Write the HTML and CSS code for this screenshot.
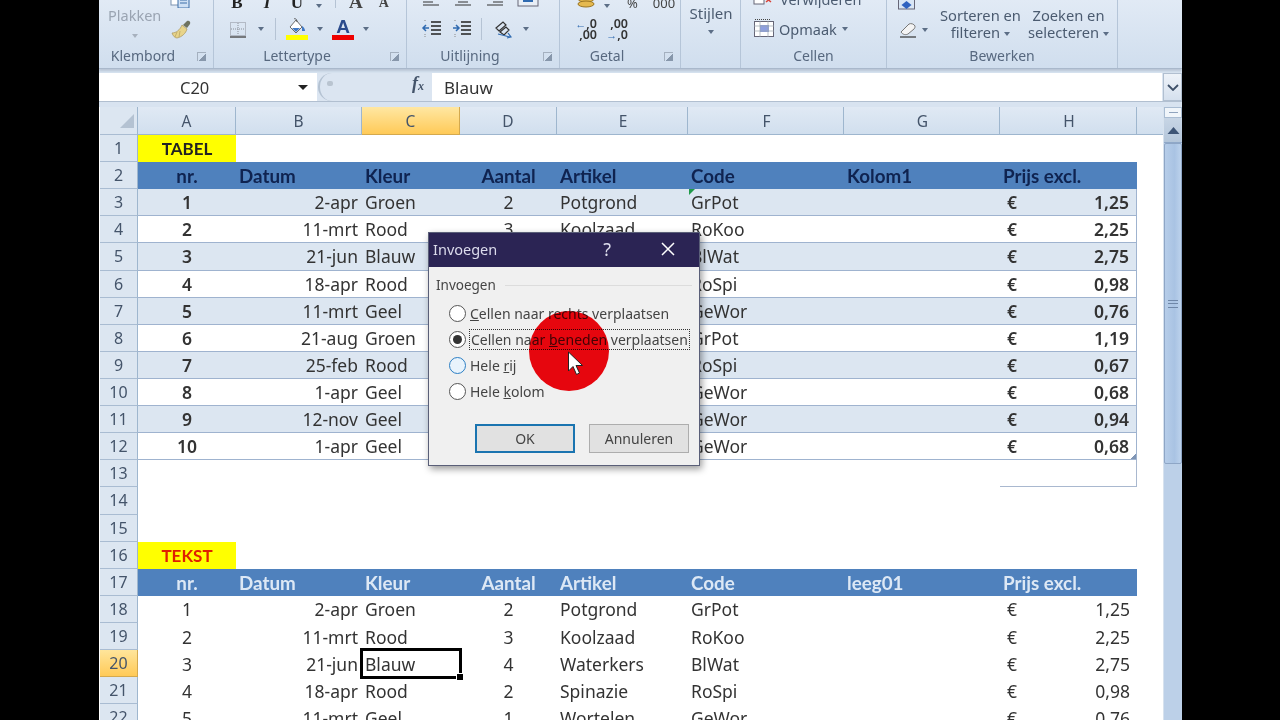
FILE: index.html
```html
<!DOCTYPE html>
<html lang="nl">
<head>
    <meta charset="UTF-8">
    <title>Invoegen - Excel</title>
    <link rel="stylesheet" href="styles.css">
</head>
<body>
<div class="app">
    <div class="ribbon">
        <div class="group g-klembord">
            <div class="tools">
                <div class="paste"><span>Plakken</span><i class="caret"></i></div>
                <div class="clip-icons">
                    <svg width="22" height="8" viewBox="0 3 22 8"><rect x="1" y="-6" width="11" height="14" fill="#fff" stroke="#7d93b0"/><rect x="8" y="-2" width="11" height="13" fill="#cfe0f4" stroke="#3c6ea8"/><path d="M10 3h7M10 6h7" stroke="#3c6ea8"/></svg>
                    <svg width="24" height="22" viewBox="0 0 24 22"><path d="M17 2c2-1 4 1 3 3l-3 4-4-3z" fill="#6f735f"/><path d="M12 6l5 4c-1 4-5 8-10 9-2 0-4-2-5-5 4 0 8-3 10-8z" fill="#e8d48a" stroke="#a8935a" stroke-width=".7"/><path d="M7 13l-2 5M10 12l-1 6" stroke="#b9a465" stroke-width=".8"/></svg>
                </div>
            </div>
            <div class="glabel lb"><span>Klembord</span><i class="launcher"></i></div>
        </div>
        <div class="group g-letter">
            <div class="tools col">
                <div class="irow r1">
                    <b class="fmt">B</b><em class="fmt ital">I</em><u class="fmt">U</u><i class="caret"></i><i class="vsep"></i><span class="big-a">A</span><span class="small-a">A</span>
                </div>
                <div class="irow r2">
                    <svg class="ic" width="20" height="20" viewBox="0 0 20 20"><rect x="2.500" y="3.500" width="15" height="13" fill="none" stroke="#8a8f98" stroke-dasharray="1 1"/><path d="M10 4v12M3 10h14" stroke="#8a8f98" stroke-dasharray="1 1"/><path d="M2 18h16" stroke="#555" stroke-width="1.500"/></svg>
                    <i class="caret"></i><i class="vsep"></i>
                    <span class="color-btn">
                        <svg width="24" height="17" viewBox="0 0 24 17"><path d="M5 9l6-7 6 7-6 6z" fill="#fff" stroke="#6b6b6b"/><path d="M7 10h8l-4 4z" fill="#3f78c4"/><path d="M17 8c2 1 3 3 3 5h-3z" fill="#3f78c4"/><path d="M9 1c1-1 3 0 3 3" fill="none" stroke="#555"/></svg>
                        <i class="swatch yellow"></i>
                    </span>
                    <i class="caret"></i>
                    <span class="color-btn">
                        <span class="a-letter">A</span>
                        <i class="swatch red"></i>
                    </span>
                    <i class="caret"></i>
                </div>
            </div>
            <div class="glabel lb"><span>Lettertype</span><i class="launcher"></i></div>
        </div>
        <div class="group g-uitlijn">
            <div class="tools col">
                <div class="irow r1 aligns">
                    <svg width="20" height="10" viewBox="0 0 20 10"><path d="M2 1h16M2 4h10M2 7h16" stroke="#333"/></svg>
                    <svg width="20" height="10" viewBox="0 0 20 10"><path d="M2 1h16M5 4h10M2 7h16" stroke="#333"/></svg>
                    <svg width="20" height="10" viewBox="0 0 20 10"><path d="M2 1h16M8 4h10M2 7h16" stroke="#333"/></svg>
                    <svg width="22" height="10" viewBox="0 0 22 10"><rect x="1" y="-3" width="20" height="11" fill="#e8eef6" stroke="#667"/><path d="M6 3h10" stroke="#2f6ab0" stroke-width="2"/></svg>
                </div>
                <div class="irow r2">
                    <svg width="22" height="20" viewBox="0 0 22 20"><path d="M10 3h10M10 7h10M10 11h10M10 15h10" stroke="#222" stroke-width="1.500"/><path d="M8 9H2M5 6L2 9l3 3" fill="none" stroke="#2f6ab0" stroke-width="1.500"/><path d="M4 1v2M4 15v3" stroke="#888" stroke-dasharray="1 1"/></svg>
                    <svg width="22" height="20" viewBox="0 0 22 20"><path d="M10 3h10M10 7h10M10 11h10M10 15h10" stroke="#222" stroke-width="1.500"/><path d="M2 9h6M5 6l3 3-3 3" fill="none" stroke="#2f6ab0" stroke-width="1.500"/><path d="M4 1v2M4 15v3" stroke="#888" stroke-dasharray="1 1"/></svg>
                    <i class="vsep"></i>
                    <svg class="orient" width="22" height="20" viewBox="0 0 22 20"><path d="M3 9l7-6 3 3-7 6zM7 13l6-5 3 3-5 5z" fill="none" stroke="#333" stroke-width="1.200"/><path d="M5 15l12 3M15 14l3 4-4 1" fill="none" stroke="#2f6ab0" stroke-width="1.200"/></svg>
                    <i class="caret"></i>
                </div>
            </div>
            <div class="glabel lb"><span>Uitlijning</span><i class="launcher"></i></div>
        </div>
        <div class="group g-getal">
            <div class="tools col">
                <div class="irow r1 nums">
                    <svg width="22" height="12" viewBox="0 0 22 12"><ellipse cx="11" cy="3" rx="8" ry="3" fill="#e5b94f" stroke="#9a7420"/><ellipse cx="11" cy="8" rx="8" ry="3" fill="#e5b94f" stroke="#9a7420"/></svg>
                    <i class="caret"></i>
                    <span class="num-top pct">%</span>
                    <span class="num-top">000</span>
                </div>
                <div class="irow r2 nums">
                    <span class="dec"><span><em class="arrow">←</em>,0</span><span>,00</span></span>
                    <span class="dec"><span>,00</span><span><em class="arrow">→</em>,0</span></span>
                </div>
            </div>
            <div class="glabel lb"><span>Getal</span><i class="launcher"></i></div>
        </div>
        <div class="group g-stijlen">
            <div class="tools stijlen"><span>Stijlen</span><i class="caret"></i></div>
            <div class="glabel"></div>
        </div>
        <div class="group g-cellen">
            <div class="tools col cellen">
                <div class="irow r1"><svg width="22" height="10" viewBox="0 2 22 10"><rect x="1" y="-4" width="10" height="12" fill="#fff" stroke="#667"/><path d="M13 2l5 4M18 2l-5 4" stroke="#d8443a" stroke-width="1.500"/></svg><span class="verw">Verwijderen</span><i class="caret"></i></div>
                <div class="irow r2"><svg width="22" height="22" viewBox="0 0 22 22"><rect x="1.500" y="3.500" width="19" height="15" fill="#fff" stroke="#667"/><rect x="7" y="7" width="9" height="7" fill="#8d9fe0"/><path d="M1 8h20M1 13h20M7 3v16M15 3v16" stroke="#9aa3ad" stroke-width=".7"/><path d="M2 1.500h16" stroke="#444" stroke-dasharray="1 1"/></svg><span>Opmaak</span><i class="caret"></i></div>
            </div>
            <div class="glabel"><span>Cellen</span></div>
        </div>
        <div class="group g-bewerken">
            <div class="tools bewerken">
                <div class="be-icons">
                    <svg width="18" height="10" viewBox="0 -2 18 10"><rect x=".5" y="-5" width="16" height="12" fill="#d9e6f5" stroke="#667"/><path d="M8.500 -1l5 4-5 4-5-4z" fill="#2f62c0"/></svg>
                    <div class="eraser">
                        <svg width="22" height="20" viewBox="0 0 22 20"><path d="M3 12l8-8c2-1 5 0 6 2 0 1 0 2-1 3l-6 5c-2 1-5 1-7-2z" fill="#f4f4f4" stroke="#777"/><path d="M2 17h16" stroke="#333" stroke-width="1.200"/></svg>
                        <i class="caret"></i>
                    </div>
                </div>
                <div class="big-btn"><span>Sorteren en</span><span>filteren<i class="caret"></i></span></div>
                <div class="big-btn"><span>Zoeken en</span><span>selecteren<i class="caret"></i></span></div>
            </div>
            <div class="glabel"><span>Bewerken</span></div>
        </div>
        <div class="group g-rest"></div>
    </div>

    <div class="formula">
        <div class="namebox"><span>C20</span><i class="caret dark"></i></div>
        <div class="fx-wrap"><i class="fx-dot"></i><span class="fx">f<sub>x</sub></span></div>
        <div class="finput">Blauw</div>
        <div class="fexpand"><svg width="12" height="7" viewBox="0 0 12 7"><path d="M1 1l5 5 5-5" fill="none" stroke="#3d4f68" stroke-width="1.800"/></svg></div>
    </div>

    <div class="workarea">
        <div class="sheet">
            <div class="row colhead">
                <div class="rh corner"><svg width="16" height="16" viewBox="0 0 16 16"><path d="M15 1v14H1z" fill="#b4c2d2"/></svg></div>
                <div class="ch">A</div><div class="ch">B</div><div class="ch active">C</div><div class="ch">D</div><div class="ch">E</div><div class="ch">F</div><div class="ch">G</div><div class="ch">H</div><div class="ch blank"></div>
            </div>

            <div class="row"><div class="rh">1</div><div class="c yellow-cell">TABEL</div></div>

            <div class="row thead dark-text"><div class="rh">2</div><div class="c ctr">nr.</div><div class="c">Datum</div><div class="c">Kleur</div><div class="c ctr">Aantal</div><div class="c">Artikel</div><div class="c">Code</div><div class="c">Kolom1</div><div class="c">Prijs excl.</div></div>

            <div class="row tr alt"><div class="rh">3</div><div class="c ctr b">1</div><div class="c rgt">2-apr</div><div class="c">Groen</div><div class="c ctr">2</div><div class="c">Potgrond</div><div class="c code-flag">GrPot</div><div class="c"></div><div class="c price b"><span>€</span><span>1,25</span></div></div>
            <div class="row tr"><div class="rh">4</div><div class="c ctr b">2</div><div class="c rgt">11-mrt</div><div class="c">Rood</div><div class="c ctr">3</div><div class="c">Koolzaad</div><div class="c">RoKoo</div><div class="c"></div><div class="c price b"><span>€</span><span>2,25</span></div></div>
            <div class="row tr alt"><div class="rh">5</div><div class="c ctr b">3</div><div class="c rgt">21-jun</div><div class="c">Blauw</div><div class="c ctr">4</div><div class="c">Waterkers</div><div class="c">BlWat</div><div class="c"></div><div class="c price b"><span>€</span><span>2,75</span></div></div>
            <div class="row tr"><div class="rh">6</div><div class="c ctr b">4</div><div class="c rgt">18-apr</div><div class="c">Rood</div><div class="c ctr">2</div><div class="c">Spinazie</div><div class="c">RoSpi</div><div class="c"></div><div class="c price b"><span>€</span><span>0,98</span></div></div>
            <div class="row tr alt"><div class="rh">7</div><div class="c ctr b">5</div><div class="c rgt">11-mrt</div><div class="c">Geel</div><div class="c ctr">1</div><div class="c">Wortelen</div><div class="c">GeWor</div><div class="c"></div><div class="c price b"><span>€</span><span>0,76</span></div></div>
            <div class="row tr"><div class="rh">8</div><div class="c ctr b">6</div><div class="c rgt">21-aug</div><div class="c">Groen</div><div class="c ctr">3</div><div class="c">Potgrond</div><div class="c">GrPot</div><div class="c"></div><div class="c price b"><span>€</span><span>1,19</span></div></div>
            <div class="row tr alt"><div class="rh">9</div><div class="c ctr b">7</div><div class="c rgt">25-feb</div><div class="c">Rood</div><div class="c ctr">2</div><div class="c">Spinazie</div><div class="c">RoSpi</div><div class="c"></div><div class="c price b"><span>€</span><span>0,67</span></div></div>
            <div class="row tr"><div class="rh">10</div><div class="c ctr b">8</div><div class="c rgt">1-apr</div><div class="c">Geel</div><div class="c ctr">1</div><div class="c">Wortelen</div><div class="c">GeWor</div><div class="c"></div><div class="c price b"><span>€</span><span>0,68</span></div></div>
            <div class="row tr alt"><div class="rh">11</div><div class="c ctr b">9</div><div class="c rgt">12-nov</div><div class="c">Geel</div><div class="c ctr">2</div><div class="c">Wortelen</div><div class="c">GeWor</div><div class="c"></div><div class="c price b"><span>€</span><span>0,94</span></div></div>
            <div class="row tr last"><div class="rh">12</div><div class="c ctr b">10</div><div class="c rgt">1-apr</div><div class="c">Geel</div><div class="c ctr">1</div><div class="c">Wortelen</div><div class="c">GeWor</div><div class="c"></div><div class="c price b"><span>€</span><span>0,68</span><i class="handle"></i></div></div>

            <div class="row"><div class="rh">13</div><div class="c"></div><div class="c"></div><div class="c"></div><div class="c"></div><div class="c"></div><div class="c"></div><div class="c"></div><div class="c frame"></div></div>
            <div class="row"><div class="rh">14</div></div>
            <div class="row"><div class="rh">15</div></div>

            <div class="row"><div class="rh">16</div><div class="c yellow-cell red-text">TEKST</div></div>

            <div class="row thead"><div class="rh">17</div><div class="c ctr">nr.</div><div class="c">Datum</div><div class="c">Kleur</div><div class="c ctr">Aantal</div><div class="c">Artikel</div><div class="c">Code</div><div class="c">leeg01</div><div class="c">Prijs excl.</div></div>

            <div class="row"><div class="rh">18</div><div class="c ctr">1</div><div class="c rgt">2-apr</div><div class="c">Groen</div><div class="c ctr">2</div><div class="c">Potgrond</div><div class="c">GrPot</div><div class="c"></div><div class="c price"><span>€</span><span>1,25</span></div></div>
            <div class="row"><div class="rh">19</div><div class="c ctr">2</div><div class="c rgt">11-mrt</div><div class="c">Rood</div><div class="c ctr">3</div><div class="c">Koolzaad</div><div class="c">RoKoo</div><div class="c"></div><div class="c price"><span>€</span><span>2,25</span></div></div>
            <div class="row"><div class="rh active">20</div><div class="c ctr">3</div><div class="c rgt">21-jun</div><div class="c selected">Blauw<i class="fill-handle"></i></div><div class="c ctr">4</div><div class="c">Waterkers</div><div class="c">BlWat</div><div class="c"></div><div class="c price"><span>€</span><span>2,75</span></div></div>
            <div class="row"><div class="rh">21</div><div class="c ctr">4</div><div class="c rgt">18-apr</div><div class="c">Rood</div><div class="c ctr">2</div><div class="c">Spinazie</div><div class="c">RoSpi</div><div class="c"></div><div class="c price"><span>€</span><span>0,98</span></div></div>
            <div class="row"><div class="rh">22</div><div class="c ctr">5</div><div class="c rgt">11-mrt</div><div class="c">Geel</div><div class="c ctr">1</div><div class="c">Wortelen</div><div class="c">GeWor</div><div class="c"></div><div class="c price"><span>€</span><span>0,76</span></div></div>
        </div>

        <div class="vscroll">
            <div class="split"><i></i></div>
            <div class="sbtn"><svg width="13" height="7" viewBox="0 0 13 7"><path d="M6.500 0l6 7H.5z" fill="#3d5475"/></svg></div>
            <div class="thumb"><i></i></div>
        </div>
    </div>

    <div class="dialog">
        <div class="dlg-title"><span>Invoegen</span><span class="q">?</span><svg width="16" height="16" viewBox="0 0 16 16"><path d="M2 2l12 12M14 2L2 14" stroke="#fff" stroke-width="1.500"/></svg></div>
        <div class="dlg-body">
            <div class="legend"><span>Invoegen</span><i></i></div>
            <div class="opts">
                <div class="opt"><i class="radio"></i><span><u>C</u>ellen naar rechts verplaatsen</span></div>
                <div class="opt on"><i class="radio"></i><span class="focus">Cellen naar <u>b</u>eneden verplaatsen</span></div>
                <div class="opt hover"><i class="radio"></i><span>Hele <u>r</u>ij</span></div>
                <div class="opt"><i class="radio"></i><span>Hele <u>k</u>olom</span></div>
            </div>
            <div class="dlg-btns">
                <div class="btn primary">OK</div>
                <div class="btn">Annuleren</div>
            </div>
        </div>
    </div>

    <div class="click-dot"></div>
    <svg class="pointer" width="18" height="26" viewBox="0 0 18 26"><path d="M1.500 1v19l4.500-4.500 3.500 8 3-1.500-3.500-7.500h6.500z" fill="#fff" stroke="#222" stroke-width="1"/></svg>
</div>
</body>
</html>
```

FILE: styles.css
```css
* {
    box-sizing: border-box;
}
html, body {
    margin: 0;
    height: 100%;
    background-color: #000;
    overflow: hidden;
}
i, em {
    font-style: normal;
}
.app {
    position: relative;
    width: 1083px;
    height: 720px;
    margin-left: 99px;
    background: #d8e3f0;
    overflow: hidden;
    font-family: "Noto Sans", Arial, sans-serif;
    color: #333;
}

/* ribbon */
.ribbon {
    display: flex;
    height: 69px;
    background: linear-gradient(#e1eaf5, #d0deee);
    border-bottom: 1px solid #a9b8cb;
    box-shadow: 0 2px 2px #b9c6d6;
    position: relative;
}
.group {
    display: flex;
    flex-direction: column;
    justify-content: flex-end;
    border-right: 1px solid #b5c5d8;
    overflow: hidden;
    flex: none;
}
.g-klembord { width: 115px; }
.g-letter { width: 193px; }
.g-uitlijn { width: 153px; }
.g-getal { width: 121px; }
.g-stijlen { width: 60px; }
.g-cellen { width: 146px; }
.g-bewerken { width: 231px; }
.g-rest { flex: 1; border: 0; }
.tools {
    flex: 1;
    display: flex;
    min-height: 0;
}
.tools.col {
    flex-direction: column;
    justify-content: flex-end;
    padding-bottom: 1px;
}
.glabel {
    height: 23px;
    flex: none;
    display: flex;
    align-items: center;
    justify-content: center;
    position: relative;
    font-size: 14px;
    color: #57687f;
    padding-bottom: 2px;
}
.glabel.lb {
    padding-right: 26px;
}
.launcher {
    position: absolute;
    right: 7px;
    top: 7px;
    width: 9px;
    height: 9px;
    border-left: 1px solid #a4b0bf;
    border-top: 1px solid #a4b0bf;
    background: linear-gradient(135deg, transparent 55%, #8797ab 55%);
}
.caret {
    display: inline-block;
    width: 0;
    height: 0;
    border: 3px solid transparent;
    border-top: 4px solid #5c6e86;
    border-bottom: 0;
    flex: none;
}
.caret.dark {
    border-width: 5px 5px 0;
    border-top-color: #222;
}
.vsep {
    display: inline-block;
    width: 1px;
    height: 22px;
    background: #b5c3d4;
    flex: none;
}
.irow {
    display: flex;
    align-items: center;
    gap: 8px;
    height: 30px;
    flex: none;
}
.irow.r1 {
    height: 12px;
    margin-bottom: 6px;
    align-items: flex-end;
    overflow: hidden;
}

/* klembord */
.g-klembord .tools {
    padding: 5px 0 0 9px;
    gap: 9px;
    font-size: 14.500px;
}
.paste {
    display: flex;
    flex-direction: column;
    align-items: center;
    gap: 9px;
    color: #9aa4b2;
}
.paste .caret {
    border-top-color: #a7b1be;
}
.clip-icons {
    display: flex;
    flex-direction: column;
    gap: 11px;
    margin-top: -5px;
}

/* lettertype */
.g-letter .tools {
    padding-left: 12px;
}
.fmt {
    font: bold 17px/10px "Liberation Serif", serif;
    color: #222;
    width: 22px;
    text-align: center;
}
.fmt.ital {
    font-style: italic;
}
.g-letter .r1 .vsep {
    margin: 0 5px;
}
.big-a {
    font: bold 19px/13px "Liberation Serif", serif;
    color: #444;
}
.small-a {
    font: bold 14px/11px "Liberation Serif", serif;
    color: #444;
    margin-left: 8px;
}
.g-letter .r2 .ic {
    margin-left: 2px;
}
.g-letter .r2 .ic + .caret {
    margin-left: 2px;
}
.g-letter .r2 .vsep {
    margin: 0 1px 0 3px;
}
.color-btn {
    display: flex;
    flex-direction: column;
    align-items: center;
    width: 24px;
}
.swatch {
    display: block;
    width: 22px;
    height: 5px;
}
.swatch.yellow { background: #ffff00; }
.swatch.red { background: #ee0000; }
.a-letter {
    font: bold 19px/17px "Liberation Sans", sans-serif;
    color: #2a4a8c;
}

/* uitlijning */
.g-uitlijn .tools {
    padding-left: 14px;
}
.aligns {
    gap: 12px;
}
.g-uitlijn .orient {
    margin-left: 3px;
}

/* getal */
.g-getal .tools {
    padding-left: 13px;
}
.g-getal .r1 {
    padding-left: 2px;
}
.nums {
    gap: 7px;
    font-size: 11px;
}
.num-top {
    font-size: 13px;
    line-height: 10px;
    color: #444;
}
.pct {
    margin: 0 8px 0 10px;
}
.dec {
    display: flex;
    flex-direction: column;
    line-height: 11px;
    font-size: 12.500px;
    color: #333;
    font-weight: 600;
    width: 24px;
    text-align: right;
}
.arrow {
    color: #2f6ab0;
    font-size: 11px;
}

/* stijlen, cellen, bewerken */
.stijlen {
    flex-direction: column;
    align-items: center;
    gap: 7px;
    padding: 3px 0 0 1px;
    font-size: 15px;
    color: #4b5b70;
}
.cellen {
    font-size: 14.500px;
    color: #4b5b70;
    padding-left: 12px;
}
.cellen .irow {
    gap: 5px;
}
.cellen .irow.r1 {
    line-height: 10px;
}
.verw {
    margin-bottom: 4px;
}
.cellen .r1 .caret {
    margin: 0 0 8px 4px;
}
.cellen .r2 span {
    margin-left: -1px;
}
.bewerken {
    padding-left: 11px;
    font-size: 14.700px;
    color: #4b5b70;
}
.be-icons {
    display: flex;
    flex-direction: column;
    gap: 10px;
    width: 31px;
    flex: none;
}
.eraser {
    display: flex;
    align-items: center;
    gap: 2px;
}
.big-btn {
    display: flex;
    flex-direction: column;
    align-items: center;
    margin-left: 11px;
    padding-top: 7px;
    line-height: 17px;
}
.big-btn + .big-btn {
    margin-left: 7px;
}
.big-btn .caret {
    margin-left: 4px;
    vertical-align: 2px;
}

/* formula bar */
.formula {
    display: flex;
    height: 29px;
    margin-top: 4px;
    background: #dbe5f1;
    border-bottom: 1px solid #b1bfd0;
}
.namebox {
    width: 218px;
    background: #fff;
    display: flex;
    align-items: center;
    font-size: 16.500px;
    color: #333;
    padding-left: 81px;
}
.namebox .caret {
    margin-left: 89px;
}
.fx-wrap {
    width: 114px;
    position: relative;
    border-left: 2px solid #b4c2d2;
    border-radius: 14px 0 0 14px;
    margin-left: 1px;
}
.fx-dot {
    position: absolute;
    left: 7px;
    top: 8px;
    width: 6px;
    height: 5px;
    background: #b9c4d0;
    border-radius: 2px;
}
.fx {
    position: absolute;
    right: 8px;
    top: 0;
    font: italic bold 18px "Liberation Serif", serif;
    color: #44546a;
}
.fx sub {
    font-size: 12px;
    vertical-align: -1px;
    line-height: 0;
}
.finput {
    flex: 1;
    background: #fff;
    display: flex;
    align-items: center;
    padding-left: 12px;
    font-size: 17px;
    color: #333;
}
.fexpand {
    width: 19px;
    margin-left: 1px;
    background: linear-gradient(#eef3f9, #d5e0ee);
    border: 1px solid #b1bfd0;
    display: flex;
    align-items: center;
    justify-content: center;
}

/* sheet */
.workarea {
    display: flex;
    margin-top: 5px;
}
.sheet {
    width: 1064px;
    flex: none;
    background: #fff;
}
.row {
    display: grid;
    grid-template-columns: 39px 98px 126px 98px 97px 131px 156px 156px 137px 26px;
    height: 27.120px;
    font-size: 17.500px;
    color: #333;
}
.rh {
    background: #dce6f1;
    border-bottom: 1px solid #a9bcd2;
    border-right: 1px solid #9eb6ce;
    color: #44546a;
    display: flex;
    align-items: center;
    justify-content: center;
    font-size: 16px;
    margin-left: 1px;
}
.rh.active {
    background: linear-gradient(#ffe59b, #ffca58);
    border-color: #d4a94e;
}
.colhead {
    height: 28px;
}
.ch {
    background: linear-gradient(#e0e9f4, #d1dfee);
    border-right: 1px solid #9eb6ce;
    border-bottom: 1px solid #9eb6ce;
    color: #44546a;
    display: flex;
    align-items: center;
    justify-content: center;
    font-size: 15.500px;
}
.ch:nth-child(n+6) {
    padding-left: 2px;
}
.ch.active {
    background: linear-gradient(#ffe7a2, #ffca58);
    border-color: #d4a94e;
}
.ch.blank {
    border-right: 0;
}
.corner {
    justify-content: flex-end;
    padding-right: 2px;
}
.c {
    display: flex;
    align-items: center;
    padding-left: 3px;
    white-space: nowrap;
    min-width: 0;
    position: relative;
}
.ctr { justify-content: center; padding-left: 0; }
.rgt { justify-content: flex-end; padding: 0 4px 0 0; }
.b { font-weight: 600; }
.yellow-cell {
    background: #ffff00;
    justify-content: center;
    font-family: "Lato", sans-serif;
    font-weight: 700;
    font-size: 17px;
    color: #222;
    padding: 0;
}
.red-text {
    color: #e02000;
}
.thead .c {
    background: #4f81bd;
    font-family: "Lato", sans-serif;
    font-weight: 700;
    font-size: 18.800px;
    color: #dde8f5;
}
.thead.dark-text .c {
    color: #0f2350;
}
.tr .c {
    border-bottom: 1px solid #9fb3cf;
}
.tr .c:nth-child(9) {
    border-right: 1px solid #9fb3cf;
}
.tr.alt .c {
    background: #dce6f1;
}
.price {
    justify-content: space-between;
    padding: 0 7px 0 7px;
}
.handle {
    position: absolute;
    right: 0;
    bottom: 0;
    width: 5px;
    height: 5px;
    background: linear-gradient(135deg, transparent 50%, #7f95b5 50%);
}
.code-flag::before {
    content: "";
    position: absolute;
    left: 1px;
    top: 0;
    border: 3px solid transparent;
    border-top-color: #1f9a4a;
    border-left-color: #1f9a4a;
}
.frame {
    border-right: 1px solid #a9b8cf;
    border-bottom: 1px solid #a9b8cf;
}
.selected {
    outline: 3px solid #000;
    outline-offset: -1px;
}
.fill-handle {
    position: absolute;
    right: -3px;
    bottom: -3px;
    width: 6px;
    height: 6px;
    background: #000;
    border: 1px solid #fff;
    border-width: 1px 0 0 1px;
    box-sizing: content-box;
}

/* scrollbar */
.vscroll {
    width: 19px;
    background: #bcd0e8;
    height: 620px;
    display: flex;
    flex-direction: column;
    border-left: 1px solid #d7e2ee;
}
.split {
    height: 11px;
    border: 1px solid #a9bcd2;
    background: #f0f5fa;
    display: flex;
    align-items: center;
    justify-content: center;
    flex: none;
}
.split i {
    width: 9px;
    height: 1px;
    background: #8fa3bd;
}
.sbtn {
    height: 25px;
    background: linear-gradient(#c7d5e5, #b4c6da);
    border-bottom: 1px solid #8fa8c8;
    display: flex;
    align-items: center;
    justify-content: center;
    flex: none;
}
.thumb {
    height: 321px;
    background: linear-gradient(90deg, #b6cde9, #a9c3e3 60%, #bcd2ec);
    border: 1px solid #8ea6c6;
    border-radius: 2px;
    display: flex;
    align-items: center;
    justify-content: center;
}
.thumb i {
    width: 10px;
    height: 8px;
    border-top: 1px solid #6f87a8;
    border-bottom: 1px solid #6f87a8;
    background: linear-gradient(#6f87a8, #6f87a8) center/100% 1px no-repeat;
}

/* dialog */
.dialog {
    position: absolute;
    left: 329px;
    top: 232px;
    width: 272px;
    height: 234px;
    background: #f0f0f0;
    border: 1px solid #5a5f78;
    box-shadow: 2px 3px 7px rgba(0, 0, 0, 0.4);
    font-size: 14px;
    color: #444;
}
.dlg-title {
    height: 34px;
    background: #2b2454;
    color: #dcdcec;
    display: flex;
    align-items: center;
    padding: 0 23px 3px 4px;
    font-size: 14.500px;
}
.dlg-title .q {
    margin: 0 49px 0 auto;
    font-size: 18px;
}
.dlg-body {
    padding: 9px 7px 0;
}
.legend {
    display: flex;
    align-items: center;
    gap: 9px;
    height: 18px;
    font-size: 13.500px;
}
.legend i {
    flex: 1;
    height: 1px;
    background: #dcdcdc;
}
.opts {
    margin: 6px 0 0 13px;
    display: flex;
    flex-direction: column;
}
.opt {
    display: flex;
    align-items: center;
    gap: 4px;
    height: 26px;
    white-space: nowrap;
}
.radio {
    width: 17px;
    height: 17px;
    border: 1px solid #555;
    border-radius: 50%;
    background: #fff;
    flex: none;
    position: relative;
}
.opt.on .radio::after {
    content: "";
    position: absolute;
    left: 3px;
    top: 3px;
    width: 9px;
    height: 9px;
    border-radius: 50%;
    background: #333;
}
.opt.hover .radio {
    border-color: #2c7fc4;
    background: #e8f3fc;
}
.focus {
    outline: 1px dotted #333;
    padding: 0 1px;
}
.dlg-btns {
    display: flex;
    justify-content: flex-end;
    gap: 14px;
    margin: 20px 3px 0 0;
}
.btn {
    width: 100px;
    height: 29px;
    background: #e1e1e1;
    border: 1px solid #adadad;
    display: flex;
    align-items: center;
    justify-content: center;
    font-size: 14px;
}
.btn.primary {
    border: 2px solid #1a74b0;
}

/* recording cursor highlight */
.click-dot {
    position: absolute;
    left: 430px;
    top: 311px;
    width: 80px;
    height: 80px;
    border-radius: 50%;
    background: #f5060e;
    mix-blend-mode: multiply;
}
.pointer {
    position: absolute;
    left: 468px;
    top: 351px;
}
```
